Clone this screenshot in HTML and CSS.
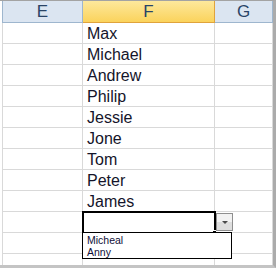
FILE: index.html
```html
<!DOCTYPE html>
<html lang="en">
<head>
  <meta charset="UTF-8">
  <meta name="viewport" content="width=device-width, initial-scale=1.0">
  <link rel="stylesheet" href="styles.css">
</head>
<body>
  <div class="window">
    <div class="sheet">
      <!-- Cabeçalho das colunas -->
      <div class="cell head">E</div>
      <div class="cell head selected">F</div>
      <div class="cell head">G</div>

      <div class="cell"></div><div class="cell">Max</div><div class="cell"></div>
      <div class="cell"></div><div class="cell">Michael</div><div class="cell"></div>
      <div class="cell"></div><div class="cell">Andrew</div><div class="cell"></div>
      <div class="cell"></div><div class="cell">Philip</div><div class="cell"></div>
      <div class="cell"></div><div class="cell">Jessie</div><div class="cell"></div>
      <div class="cell"></div><div class="cell">Jone</div><div class="cell"></div>
      <div class="cell"></div><div class="cell">Tom</div><div class="cell"></div>
      <div class="cell"></div><div class="cell">Peter</div><div class="cell"></div>
      <div class="cell"></div><div class="cell">James</div><div class="cell"></div>

      <!-- Célula ativa com lista suspensa -->
      <div class="cell"></div>
      <div class="cell active">
        <span class="handle"></span>
        <button class="drop-btn"><span class="arrow"></span></button>
        <ul class="drop-list">
          <li>Micheal</li>
          <li>Anny</li>
        </ul>
      </div>
      <div class="cell"></div>

      <div class="cell"></div><div class="cell"></div><div class="cell"></div>
      <div class="cell"></div><div class="cell"></div><div class="cell"></div>
    </div>
  </div>
</body>
</html>
```

FILE: styles.css
```css
/* Reset */
* {
  margin: 0;
  padding: 0;
  box-sizing: border-box;
}

body {
  background-color: #fff;
  font-family: 'Liberation Sans', Arial, sans-serif;
}

/* Janela da planilha */
.window {
  width: 276px;
  height: 268px;
  overflow: hidden;
  border-top: 1px solid #a3a3a3;
  border-right: 3px solid #ababab;
  border-bottom: 3px solid #c4c4c4;
  padding-left: 2px;
}

.sheet {
  display: grid;
  grid-template-columns: 81px 132px 1fr;
  grid-auto-rows: 21px;
  grid-template-rows: 22px;
}

.cell {
  border-right: 1px solid #d9d9d9;
  border-bottom: 1px solid #d9d9d9;
  font-size: 16px;
  line-height: 21px;
  color: #14142a;
  padding-left: 4px;
  white-space: nowrap;
}

.cell:nth-child(3n+1) {
  border-left: 1px solid #d9d9d9;
}

/* Cabeçalho */
.cell.head {
  background-color: #dbe5f1;
  border-right-color: #9eb6ce;
  border-bottom-color: #9eb6ce;
  color: #2a4466;
  text-align: center;
  padding-left: 0;
  font-size: 17px;
  line-height: 21px;
}

.cell.head:first-child {
  border-left-color: #9eb6ce;
}

.cell.head.selected {
  background: linear-gradient(#fde89c, #fbd35c);
  border-right-color: #e0a33c;
  border-bottom-color: #e0a33c;
}

/* Célula ativa */
.cell.active {
  position: relative;
  outline: 2px solid #000;
  outline-offset: -1px;
  z-index: 2;
}

.handle {
  position: absolute;
  right: -3px;
  bottom: -3px;
  width: 5px;
  height: 5px;
  background-color: #000;
  border: 1px solid #fff;
}

.drop-btn {
  position: absolute;
  left: calc(100% + 2px);
  top: 1px;
  width: 17px;
  height: 18px;
  border: 1px solid #8f8f8f;
  background: linear-gradient(#f2f2f2 50%, #dedede 50%);
  display: flex;
  justify-content: center;
  align-items: center;
}

.arrow {
  width: 0;
  height: 0;
  border-left: 3px solid transparent;
  border-right: 3px solid transparent;
  border-top: 3px solid #4a4a4a;
}

.drop-list {
  position: absolute;
  left: -1px;
  top: 100%;
  width: 150px;
  height: 27px;
  background-color: #fff;
  border: 1px solid #000;
  list-style: none;
  padding: 1px 0 0 4px;
}

.drop-list li {
  font-family: 'Liberation Sans', Arial, sans-serif;
  font-size: 10.5px;
  line-height: 12px;
  color: #101038;
}
```
